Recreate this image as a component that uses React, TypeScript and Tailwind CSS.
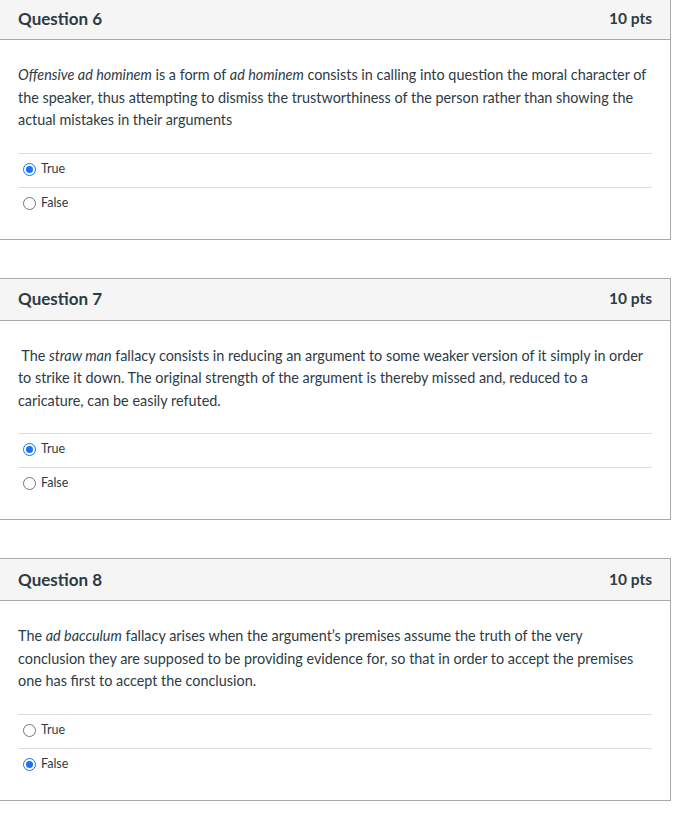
import React from "react";

type Question = {
  title: string;
  points: string;
  body: React.ReactNode;
  answer: "True" | "False";
};

const questions: Question[] = [
  {
    title: "Question 6",
    points: "10 pts",
    answer: "True",
    body: (
      <>
        <em>Offensive ad hominem</em> is a form of <em>ad hominem</em> consists in calling into question the moral
        character of the speaker, thus attempting to dismiss the trustworthiness of the person rather than showing the
        actual mistakes in their arguments
      </>
    ),
  },
  {
    title: "Question 7",
    points: "10 pts",
    answer: "True",
    body: (
      <>
        {"\u00a0"}The <em>straw man</em> fallacy consists in reducing an argument to some weaker version of it simply in
        order to strike it down. The original strength of the argument is thereby missed and, reduced to a caricature,
        can be easily refuted.
      </>
    ),
  },
  {
    title: "Question 8",
    points: "10 pts",
    answer: "False",
    body: (
      <>
        The <em>ad bacculum</em> fallacy arises when the argument’s premises assume the truth of the very conclusion
        they are supposed to be providing evidence for, so that in order to accept the premises one has first to accept
        the conclusion.
      </>
    ),
  },
];

function Radio({ checked }: { checked: boolean }) {
  if (checked) {
    return (
      <span className="flex h-[13px] w-[13px] items-center justify-center rounded-full border-[1.5px] border-[#1a73e8] bg-white">
        <span className="h-[7px] w-[7px] rounded-full bg-[#1a73e8]" />
      </span>
    );
  }
  return <span className="h-[13px] w-[13px] rounded-full border border-[#767676] bg-white" />;
}

function QuestionCard({ q }: { q: Question }) {
  return (
    <div className="w-[672px] border border-[#a9a9a9] bg-white">
      <div className="flex h-[42px] items-center justify-between border-b border-[#a9a9a9] bg-[#f5f5f5] px-[18px] font-bold text-[#2d3b45]">
        <span className="text-[17px]">{q.title}</span>
        <span className="text-[15.5px]">{q.points}</span>
      </div>
      <div className="px-[18px] pt-[24px] pb-[18px]">
        <p className="text-[14.4px] leading-[22.5px] text-[#2d3b45]">{q.body}</p>
        <div className="mt-[21px]">
          {(["True", "False"] as const).map((opt) => (
            <div
              key={opt}
              className="flex h-[34px] items-center gap-[5px] border-t border-[#dcdcdc] pb-[2px] pl-[5px] text-[12.5px] text-[#2d3b45]"
            >
              <Radio checked={q.answer === opt} />
              <span>{opt}</span>
            </div>
          ))}
        </div>
      </div>
    </div>
  );
}

export default function App() {
  return (
    <div
      className="-mt-[3px] -ml-px flex flex-col gap-[38px] bg-white pb-10"
      style={{ fontFamily: "Lato, 'Liberation Sans', sans-serif" }}
    >
      {questions.map((q) => (
        <QuestionCard key={q.title} q={q} />
      ))}
    </div>
  );
}
